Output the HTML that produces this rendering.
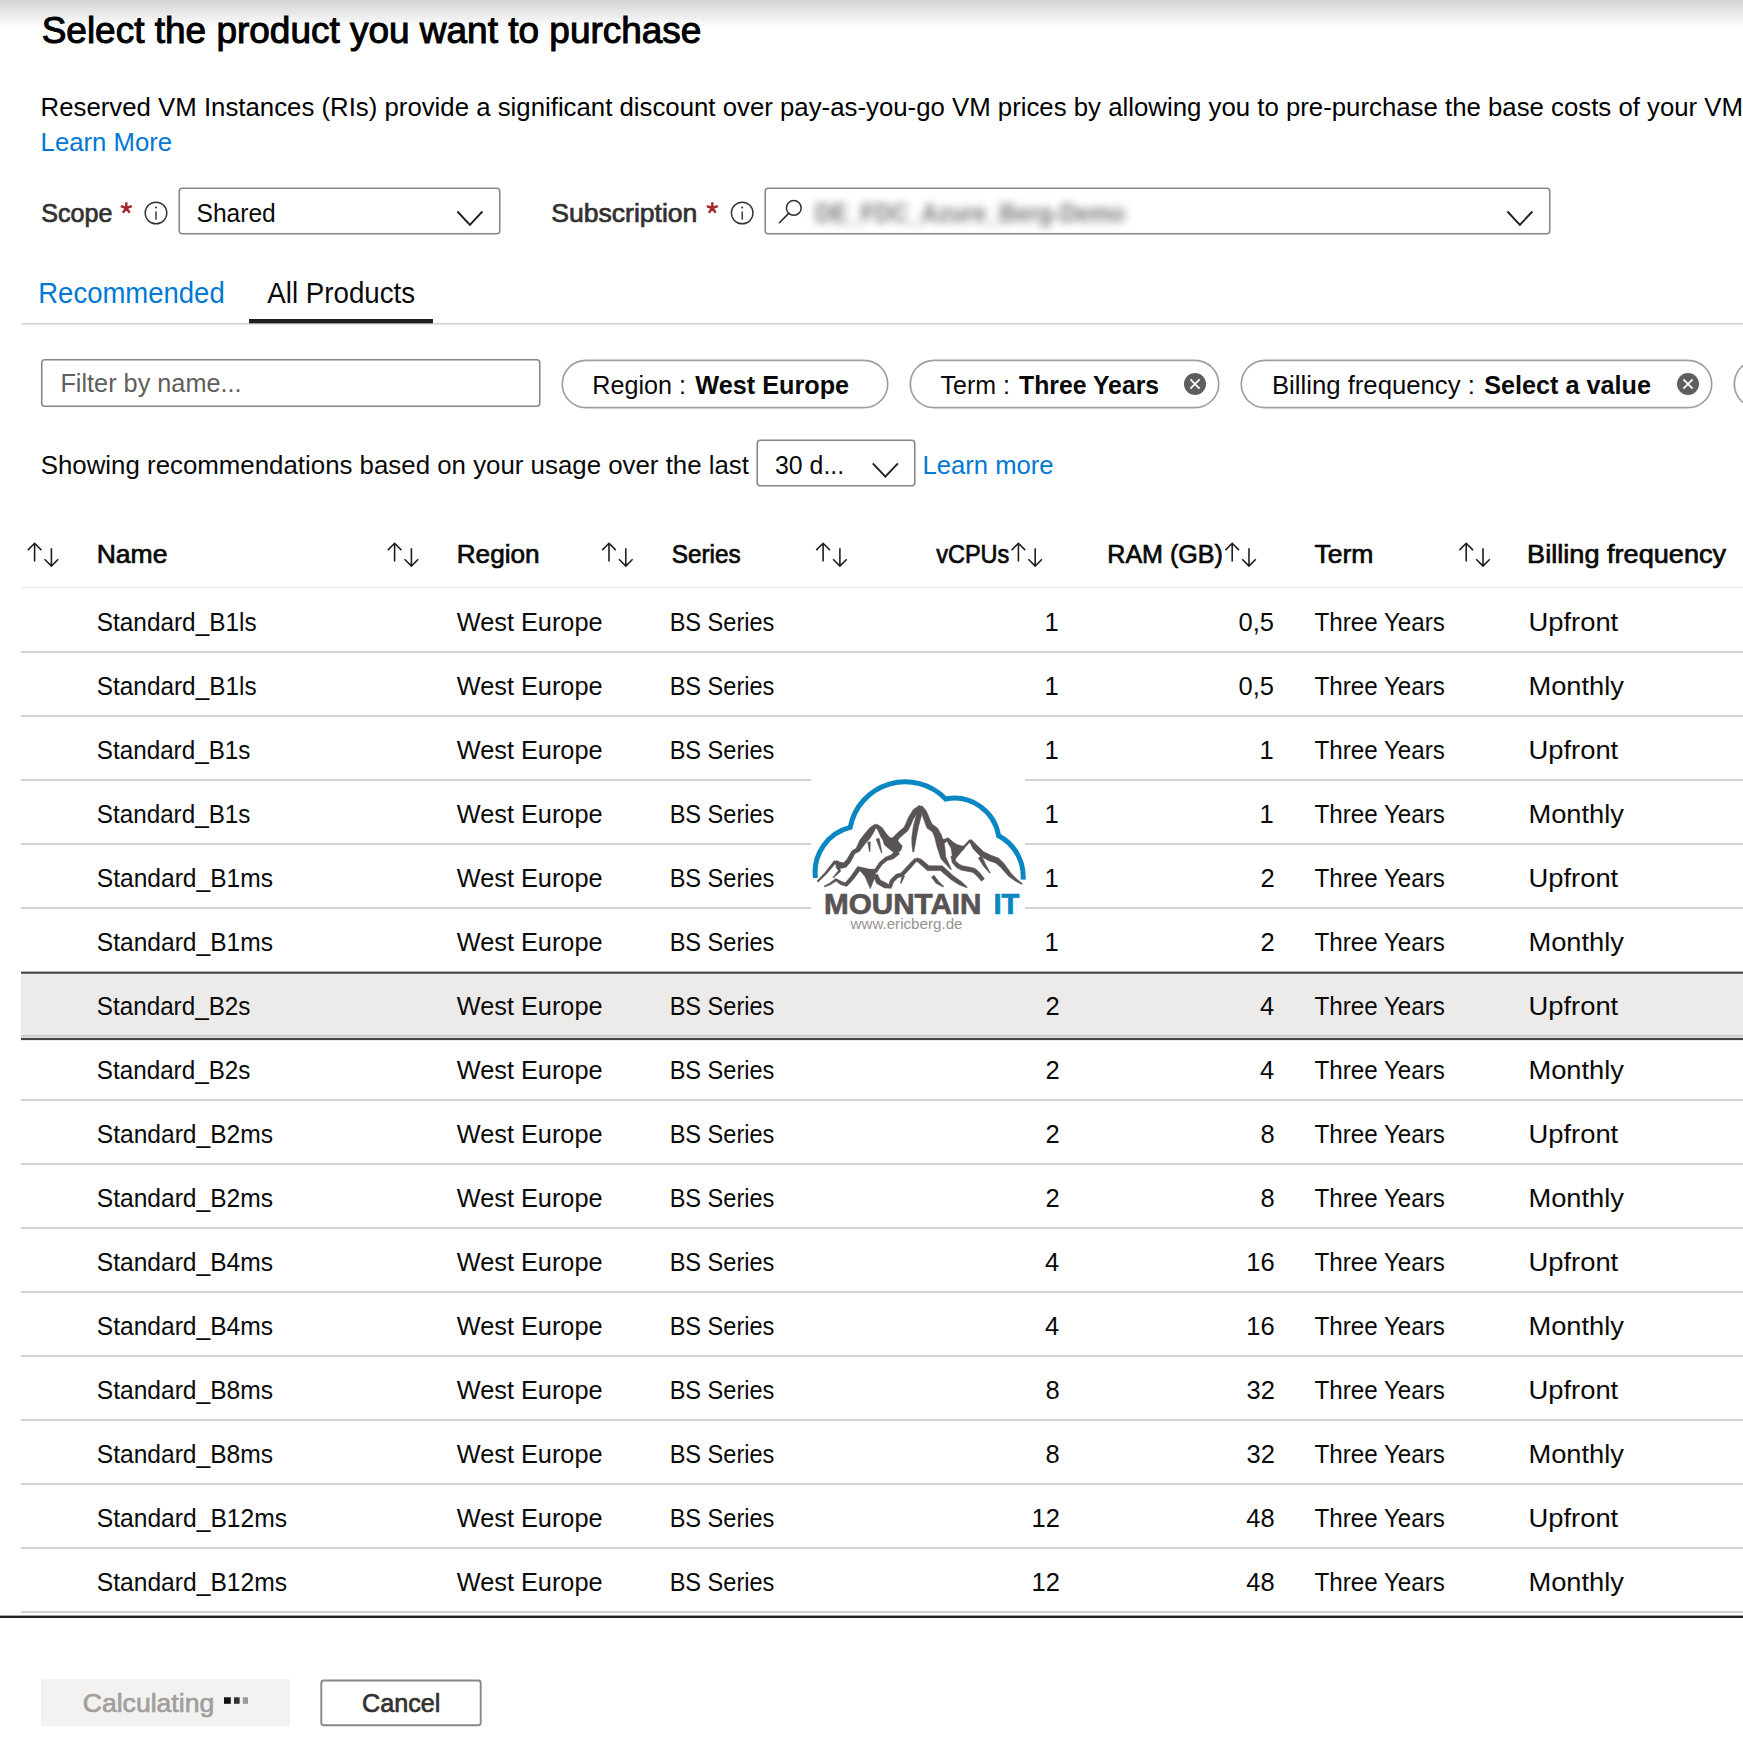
<!DOCTYPE html>
<html><head><meta charset="utf-8"><style>
html,body{margin:0;padding:0;background:#fff;width:1743px;height:1745px;overflow:hidden}
svg{display:block;font-family:"Liberation Sans", sans-serif}
</style></head><body>
<svg width="1743" height="1745" viewBox="0 0 1743 1745">
<defs><linearGradient id="tg" x1="0" y1="0" x2="0" y2="1"><stop offset="0" stop-color="#d5d5d5"/><stop offset="0.35" stop-color="#e3e3e3"/><stop offset="1" stop-color="#ffffff"/></linearGradient><filter id="bl" x="-10%" y="-50%" width="120%" height="200%"><feGaussianBlur stdDeviation="4"/></filter></defs>
<rect x="0" y="0" width="1743" height="28" fill="url(#tg)" />
<text x="41.69" y="43" font-size="36.6" fill="#000" stroke="#000" stroke-width="1.01" textLength="659.74" lengthAdjust="spacingAndGlyphs" >Select the product you want to purchase</text>
<text x="40.58" y="116" font-size="25.5" fill="#000" textLength="1702.48" lengthAdjust="spacingAndGlyphs" >Reserved VM Instances (RIs) provide a significant discount over pay-as-you-go VM prices by allowing you to pre-purchase the base costs of your VM</text>
<text x="40.58" y="150.5" font-size="25.5" fill="#0078d4" textLength="131.48" lengthAdjust="spacingAndGlyphs" >Learn More</text>
<text x="41.26" y="221.5" font-size="25.5" fill="#323130" stroke="#323130" stroke-width="0.7" textLength="71.24" lengthAdjust="spacingAndGlyphs" >Scope</text>
<path d="M126.30,208.00 L126.30,202.20 M126.30,208.00 L131.82,206.21 M126.30,208.00 L129.71,212.69 M126.30,208.00 L122.89,212.69 M126.30,208.00 L120.78,206.21" stroke="#a4262c" stroke-width="2.4" stroke-linecap="butt"/>
<circle cx="156" cy="213" r="10.8" fill="none" stroke="#323130" stroke-width="1.4"/>
<rect x="155.3" y="211.4" width="1.4" height="8.3" fill="#323130"/>
<circle cx="156" cy="207.6" r="1.0" fill="#323130"/>
<rect x="179.25" y="188.25" width="320.5" height="45.5" fill="none" stroke="#8a8886" stroke-width="1.6" rx="3" />
<text x="196.6" y="222" font-size="25.5" fill="#0a0a0a" textLength="79.17" lengthAdjust="spacingAndGlyphs" >Shared</text>
<path d="M457.4,211.5 L469.9,224.8 L482.4,211.5" fill="none" stroke="#201f1e" stroke-width="1.9"/>
<text x="551.22" y="221.5" font-size="25.5" fill="#323130" stroke="#323130" stroke-width="0.7" textLength="146.16" lengthAdjust="spacingAndGlyphs" >Subscription</text>
<path d="M712.30,208.00 L712.30,202.20 M712.30,208.00 L717.82,206.21 M712.30,208.00 L715.71,212.69 M712.30,208.00 L708.89,212.69 M712.30,208.00 L706.78,206.21" stroke="#a4262c" stroke-width="2.4" stroke-linecap="butt"/>
<circle cx="742.2" cy="213" r="10.8" fill="none" stroke="#323130" stroke-width="1.4"/>
<rect x="741.5" y="211.4" width="1.4" height="8.3" fill="#323130"/>
<circle cx="742.2" cy="207.6" r="1.0" fill="#323130"/>
<rect x="765.25" y="188.25" width="784.5" height="45.5" fill="none" stroke="#8a8886" stroke-width="1.6" rx="3" />
<circle cx="793.8" cy="207.9" r="7.4" fill="none" stroke="#323130" stroke-width="1.5"/>
<path d="M788.6,213.4 L779,223.2" stroke="#323130" stroke-width="1.6"/>
<g filter="url(#bl)">
<text x="815" y="222" font-size="25" fill="#777" font-weight="700" textLength="310" lengthAdjust="spacingAndGlyphs" >DE_FDC_Azure_Berg-Demo</text>
</g>
<path d="M1507.4,211.5 L1519.9,224.8 L1532.4,211.5" fill="none" stroke="#201f1e" stroke-width="1.9"/>
<text x="38.25" y="303" font-size="28.8" fill="#0078d4" textLength="186.45" lengthAdjust="spacingAndGlyphs" >Recommended</text>
<text x="267.3" y="303" font-size="28.8" fill="#0a0a0a" textLength="147.81" lengthAdjust="spacingAndGlyphs" >All Products</text>
<rect x="21" y="323" width="1722" height="1.5" fill="#d2d0ce" />
<rect x="249" y="319" width="184" height="4.3" fill="#201f1e" />
<rect x="41.75" y="359.75" width="498.0" height="46.5" fill="none" stroke="#8a8886" stroke-width="1.6" rx="3" />
<text x="60.42" y="391.5" font-size="25.5" fill="#605e5c" textLength="181.17" lengthAdjust="spacingAndGlyphs" >Filter by name...</text>
<rect x="562.3" y="360.3" width="325.4" height="47.4" fill="none" stroke="#a19f9d" stroke-width="1.7" rx="23.7" />
<text x="592.33" y="394" font-size="25.5" fill="#0a0a0a" textLength="93.68" lengthAdjust="spacingAndGlyphs" >Region :</text>
<text x="695.3" y="394" font-size="25.5" fill="#0a0a0a" font-weight="700" textLength="153.78" lengthAdjust="spacingAndGlyphs" >West Europe</text>
<rect x="910.3" y="360.3" width="308.4" height="47.4" fill="none" stroke="#a19f9d" stroke-width="1.7" rx="23.7" />
<text x="940.51" y="394" font-size="25.5" fill="#0a0a0a" textLength="69.49" lengthAdjust="spacingAndGlyphs" >Term :</text>
<text x="1019.06" y="394" font-size="25.5" fill="#0a0a0a" font-weight="700" textLength="140.05" lengthAdjust="spacingAndGlyphs" >Three Years</text>
<circle cx="1195" cy="384" r="11" fill="#605e5c"/>
<path d="M1190.4,379.4 L1199.6,388.6 M1199.6,379.4 L1190.4,388.6" stroke="#fff" stroke-width="1.8"/>
<rect x="1241.3" y="360.3" width="470.4" height="47.4" fill="none" stroke="#a19f9d" stroke-width="1.7" rx="23.7" />
<text x="1271.98" y="394" font-size="25.5" fill="#0a0a0a" textLength="202.81" lengthAdjust="spacingAndGlyphs" >Billing frequency :</text>
<text x="1484.26" y="394" font-size="25.5" fill="#0a0a0a" font-weight="700" textLength="166.68" lengthAdjust="spacingAndGlyphs" >Select a value</text>
<circle cx="1688" cy="384" r="11" fill="#605e5c"/>
<path d="M1683.4,379.4 L1692.6,388.6 M1692.6,379.4 L1683.4,388.6" stroke="#fff" stroke-width="1.8"/>
<rect x="1734.3" y="360.3" width="364.9" height="47.4" fill="none" stroke="#a19f9d" stroke-width="1.7" rx="23.7" />
<text x="40.73" y="474" font-size="25.5" fill="#0a0a0a" textLength="708.26" lengthAdjust="spacingAndGlyphs" >Showing recommendations based on your usage over the last</text>
<rect x="757.25" y="440.25" width="157.5" height="45.5" fill="none" stroke="#8a8886" stroke-width="1.6" rx="3" />
<text x="775.03" y="474" font-size="25.5" fill="#0a0a0a" textLength="69.11" lengthAdjust="spacingAndGlyphs" >30 d...</text>
<path d="M872.8,463.3 L885.3499999999999,476.6 L897.9,463.3" fill="none" stroke="#201f1e" stroke-width="1.9"/>
<text x="922.49" y="474" font-size="25.5" fill="#0078d4" textLength="131.07" lengthAdjust="spacingAndGlyphs" >Learn more</text>
<path d="M34.6,561.5 L34.6,543.5 M27.8,550.1 L34.6,543.3000000000001 L41.4,550.1 M51.4,548.2 L51.4,565.9000000000001 M44.599999999999994,559.3000000000001 L51.4,566.1 L58.2,559.3000000000001" fill="none" stroke="#201f1e" stroke-width="1.6"/>
<path d="M394.59999999999997,561.5 L394.59999999999997,543.5 M387.8,550.1 L394.59999999999997,543.3000000000001 L401.4,550.1 M411.4,548.2 L411.4,565.9000000000001 M404.59999999999997,559.3000000000001 L411.4,566.1 L418.2,559.3000000000001" fill="none" stroke="#201f1e" stroke-width="1.6"/>
<path d="M609.0,561.5 L609.0,543.5 M602.2,550.1 L609.0,543.3000000000001 L615.8000000000001,550.1 M625.8000000000001,548.2 L625.8000000000001,565.9000000000001 M619.0,559.3000000000001 L625.8000000000001,566.1 L632.6,559.3000000000001" fill="none" stroke="#201f1e" stroke-width="1.6"/>
<path d="M823.1,561.5 L823.1,543.5 M816.3000000000001,550.1 L823.1,543.3000000000001 L829.9000000000001,550.1 M839.9000000000001,548.2 L839.9000000000001,565.9000000000001 M833.1,559.3000000000001 L839.9000000000001,566.1 L846.7,559.3000000000001" fill="none" stroke="#201f1e" stroke-width="1.6"/>
<path d="M1018.4,561.5 L1018.4,543.5 M1011.6,550.1 L1018.4,543.3000000000001 L1025.2,550.1 M1035.2,548.2 L1035.2,565.9000000000001 M1028.4,559.3000000000001 L1035.2,566.1 L1042,559.3000000000001" fill="none" stroke="#201f1e" stroke-width="1.6"/>
<path d="M1232.2,561.5 L1232.2,543.5 M1225.3999999999999,550.1 L1232.2,543.3000000000001 L1239.0,550.1 M1249.0,548.2 L1249.0,565.9000000000001 M1242.2,559.3000000000001 L1249.0,566.1 L1255.8,559.3000000000001" fill="none" stroke="#201f1e" stroke-width="1.6"/>
<path d="M1466.2,561.5 L1466.2,543.5 M1459.3999999999999,550.1 L1466.2,543.3000000000001 L1473.0,550.1 M1483.0,548.2 L1483.0,565.9000000000001 M1476.2,559.3000000000001 L1483.0,566.1 L1489.8,559.3000000000001" fill="none" stroke="#201f1e" stroke-width="1.6"/>
<text x="96.68" y="563" font-size="25.5" fill="#0a0a0a" stroke="#0a0a0a" stroke-width="0.7" textLength="70.84" lengthAdjust="spacingAndGlyphs" >Name</text>
<text x="456.7" y="563" font-size="25.5" fill="#0a0a0a" stroke="#0a0a0a" stroke-width="0.7" textLength="82.94" lengthAdjust="spacingAndGlyphs" >Region</text>
<text x="671.68" y="563" font-size="25.5" fill="#0a0a0a" stroke="#0a0a0a" stroke-width="0.7" textLength="69.02" lengthAdjust="spacingAndGlyphs" >Series</text>
<text x="936.23" y="563" font-size="25.5" fill="#0a0a0a" stroke="#0a0a0a" stroke-width="0.7" textLength="73.12" lengthAdjust="spacingAndGlyphs" >vCPUs</text>
<text x="1107.28" y="563" font-size="25.5" fill="#0a0a0a" stroke="#0a0a0a" stroke-width="0.7" textLength="115.63" lengthAdjust="spacingAndGlyphs" >RAM (GB)</text>
<text x="1314.44" y="563" font-size="25.5" fill="#0a0a0a" stroke="#0a0a0a" stroke-width="0.7" textLength="59.04" lengthAdjust="spacingAndGlyphs" >Term</text>
<text x="1527.14" y="563" font-size="25.5" fill="#0a0a0a" stroke="#0a0a0a" stroke-width="0.7" textLength="198.95" lengthAdjust="spacingAndGlyphs" >Billing frequency</text>
<rect x="21" y="587" width="1722" height="1.5" fill="#edebe9" />
<text x="96.81" y="631" font-size="25.5" fill="#0a0a0a" textLength="159.79" lengthAdjust="spacingAndGlyphs" >Standard_B1ls</text>
<text x="456.75" y="631" font-size="25.5" fill="#0a0a0a" textLength="145.83" lengthAdjust="spacingAndGlyphs" >West Europe</text>
<text x="669.65" y="631" font-size="25.5" fill="#0a0a0a" textLength="104.77" lengthAdjust="spacingAndGlyphs" >BS Series</text>
<text x="1058.69" y="631" font-size="25.5" fill="#0a0a0a" text-anchor="end" >1</text>
<text x="1274.0" y="631" font-size="25.5" fill="#0a0a0a" text-anchor="end" >0,5</text>
<text x="1314.43" y="631" font-size="25.5" fill="#0a0a0a" textLength="130.54" lengthAdjust="spacingAndGlyphs" >Three Years</text>
<text x="1528.45" y="631" font-size="25.5" fill="#0a0a0a" textLength="89.78" lengthAdjust="spacingAndGlyphs" >Upfront</text>
<rect x="21" y="651.2" width="1722" height="1.6" fill="#c8c6c4" />
<text x="96.81" y="695" font-size="25.5" fill="#0a0a0a" textLength="159.79" lengthAdjust="spacingAndGlyphs" >Standard_B1ls</text>
<text x="456.75" y="695" font-size="25.5" fill="#0a0a0a" textLength="145.83" lengthAdjust="spacingAndGlyphs" >West Europe</text>
<text x="669.65" y="695" font-size="25.5" fill="#0a0a0a" textLength="104.77" lengthAdjust="spacingAndGlyphs" >BS Series</text>
<text x="1058.69" y="695" font-size="25.5" fill="#0a0a0a" text-anchor="end" >1</text>
<text x="1274.0" y="695" font-size="25.5" fill="#0a0a0a" text-anchor="end" >0,5</text>
<text x="1314.43" y="695" font-size="25.5" fill="#0a0a0a" textLength="130.54" lengthAdjust="spacingAndGlyphs" >Three Years</text>
<text x="1528.46" y="695" font-size="25.5" fill="#0a0a0a" textLength="95.49" lengthAdjust="spacingAndGlyphs" >Monthly</text>
<rect x="21" y="715.2" width="1722" height="1.6" fill="#c8c6c4" />
<text x="96.81" y="759" font-size="25.5" fill="#0a0a0a" textLength="153.62" lengthAdjust="spacingAndGlyphs" >Standard_B1s</text>
<text x="456.75" y="759" font-size="25.5" fill="#0a0a0a" textLength="145.83" lengthAdjust="spacingAndGlyphs" >West Europe</text>
<text x="669.65" y="759" font-size="25.5" fill="#0a0a0a" textLength="104.77" lengthAdjust="spacingAndGlyphs" >BS Series</text>
<text x="1058.69" y="759" font-size="25.5" fill="#0a0a0a" text-anchor="end" >1</text>
<text x="1273.69" y="759" font-size="25.5" fill="#0a0a0a" text-anchor="end" >1</text>
<text x="1314.43" y="759" font-size="25.5" fill="#0a0a0a" textLength="130.54" lengthAdjust="spacingAndGlyphs" >Three Years</text>
<text x="1528.45" y="759" font-size="25.5" fill="#0a0a0a" textLength="89.78" lengthAdjust="spacingAndGlyphs" >Upfront</text>
<rect x="21" y="779.2" width="1722" height="1.6" fill="#c8c6c4" />
<text x="96.81" y="823" font-size="25.5" fill="#0a0a0a" textLength="153.62" lengthAdjust="spacingAndGlyphs" >Standard_B1s</text>
<text x="456.75" y="823" font-size="25.5" fill="#0a0a0a" textLength="145.83" lengthAdjust="spacingAndGlyphs" >West Europe</text>
<text x="669.65" y="823" font-size="25.5" fill="#0a0a0a" textLength="104.77" lengthAdjust="spacingAndGlyphs" >BS Series</text>
<text x="1058.69" y="823" font-size="25.5" fill="#0a0a0a" text-anchor="end" >1</text>
<text x="1273.69" y="823" font-size="25.5" fill="#0a0a0a" text-anchor="end" >1</text>
<text x="1314.43" y="823" font-size="25.5" fill="#0a0a0a" textLength="130.54" lengthAdjust="spacingAndGlyphs" >Three Years</text>
<text x="1528.46" y="823" font-size="25.5" fill="#0a0a0a" textLength="95.49" lengthAdjust="spacingAndGlyphs" >Monthly</text>
<rect x="21" y="843.2" width="1722" height="1.6" fill="#c8c6c4" />
<text x="96.8" y="887" font-size="25.5" fill="#0a0a0a" textLength="176.13" lengthAdjust="spacingAndGlyphs" >Standard_B1ms</text>
<text x="456.75" y="887" font-size="25.5" fill="#0a0a0a" textLength="145.83" lengthAdjust="spacingAndGlyphs" >West Europe</text>
<text x="669.65" y="887" font-size="25.5" fill="#0a0a0a" textLength="104.77" lengthAdjust="spacingAndGlyphs" >BS Series</text>
<text x="1058.69" y="887" font-size="25.5" fill="#0a0a0a" text-anchor="end" >1</text>
<text x="1274.79" y="887" font-size="25.5" fill="#0a0a0a" text-anchor="end" >2</text>
<text x="1314.43" y="887" font-size="25.5" fill="#0a0a0a" textLength="130.54" lengthAdjust="spacingAndGlyphs" >Three Years</text>
<text x="1528.45" y="887" font-size="25.5" fill="#0a0a0a" textLength="89.78" lengthAdjust="spacingAndGlyphs" >Upfront</text>
<rect x="21" y="907.2" width="1722" height="1.6" fill="#c8c6c4" />
<text x="96.8" y="951" font-size="25.5" fill="#0a0a0a" textLength="176.13" lengthAdjust="spacingAndGlyphs" >Standard_B1ms</text>
<text x="456.75" y="951" font-size="25.5" fill="#0a0a0a" textLength="145.83" lengthAdjust="spacingAndGlyphs" >West Europe</text>
<text x="669.65" y="951" font-size="25.5" fill="#0a0a0a" textLength="104.77" lengthAdjust="spacingAndGlyphs" >BS Series</text>
<text x="1058.69" y="951" font-size="25.5" fill="#0a0a0a" text-anchor="end" >1</text>
<text x="1274.79" y="951" font-size="25.5" fill="#0a0a0a" text-anchor="end" >2</text>
<text x="1314.43" y="951" font-size="25.5" fill="#0a0a0a" textLength="130.54" lengthAdjust="spacingAndGlyphs" >Three Years</text>
<text x="1528.46" y="951" font-size="25.5" fill="#0a0a0a" textLength="95.49" lengthAdjust="spacingAndGlyphs" >Monthly</text>
<rect x="21" y="974" width="1722" height="61" fill="#edebe9" />
<text x="96.81" y="1015" font-size="25.5" fill="#0a0a0a" textLength="153.62" lengthAdjust="spacingAndGlyphs" >Standard_B2s</text>
<text x="456.75" y="1015" font-size="25.5" fill="#0a0a0a" textLength="145.83" lengthAdjust="spacingAndGlyphs" >West Europe</text>
<text x="669.65" y="1015" font-size="25.5" fill="#0a0a0a" textLength="104.77" lengthAdjust="spacingAndGlyphs" >BS Series</text>
<text x="1059.79" y="1015" font-size="25.5" fill="#0a0a0a" text-anchor="end" >2</text>
<text x="1274.29" y="1015" font-size="25.5" fill="#0a0a0a" text-anchor="end" >4</text>
<text x="1314.43" y="1015" font-size="25.5" fill="#0a0a0a" textLength="130.54" lengthAdjust="spacingAndGlyphs" >Three Years</text>
<text x="1528.45" y="1015" font-size="25.5" fill="#0a0a0a" textLength="89.78" lengthAdjust="spacingAndGlyphs" >Upfront</text>
<rect x="21" y="971.6" width="1722" height="2.2" fill="#4a4846" />
<rect x="21" y="1035" width="1722" height="1.6" fill="#c8c6c4" />
<rect x="21" y="1037.8" width="1722" height="2.3" fill="#484644" />
<text x="96.81" y="1079" font-size="25.5" fill="#0a0a0a" textLength="153.62" lengthAdjust="spacingAndGlyphs" >Standard_B2s</text>
<text x="456.75" y="1079" font-size="25.5" fill="#0a0a0a" textLength="145.83" lengthAdjust="spacingAndGlyphs" >West Europe</text>
<text x="669.65" y="1079" font-size="25.5" fill="#0a0a0a" textLength="104.77" lengthAdjust="spacingAndGlyphs" >BS Series</text>
<text x="1059.79" y="1079" font-size="25.5" fill="#0a0a0a" text-anchor="end" >2</text>
<text x="1274.29" y="1079" font-size="25.5" fill="#0a0a0a" text-anchor="end" >4</text>
<text x="1314.43" y="1079" font-size="25.5" fill="#0a0a0a" textLength="130.54" lengthAdjust="spacingAndGlyphs" >Three Years</text>
<text x="1528.46" y="1079" font-size="25.5" fill="#0a0a0a" textLength="95.49" lengthAdjust="spacingAndGlyphs" >Monthly</text>
<rect x="21" y="1099.2" width="1722" height="1.6" fill="#c8c6c4" />
<text x="96.8" y="1143" font-size="25.5" fill="#0a0a0a" textLength="176.23" lengthAdjust="spacingAndGlyphs" >Standard_B2ms</text>
<text x="456.75" y="1143" font-size="25.5" fill="#0a0a0a" textLength="145.83" lengthAdjust="spacingAndGlyphs" >West Europe</text>
<text x="669.65" y="1143" font-size="25.5" fill="#0a0a0a" textLength="104.77" lengthAdjust="spacingAndGlyphs" >BS Series</text>
<text x="1059.79" y="1143" font-size="25.5" fill="#0a0a0a" text-anchor="end" >2</text>
<text x="1274.79" y="1143" font-size="25.5" fill="#0a0a0a" text-anchor="end" >8</text>
<text x="1314.43" y="1143" font-size="25.5" fill="#0a0a0a" textLength="130.54" lengthAdjust="spacingAndGlyphs" >Three Years</text>
<text x="1528.45" y="1143" font-size="25.5" fill="#0a0a0a" textLength="89.78" lengthAdjust="spacingAndGlyphs" >Upfront</text>
<rect x="21" y="1163.2" width="1722" height="1.6" fill="#c8c6c4" />
<text x="96.8" y="1207" font-size="25.5" fill="#0a0a0a" textLength="176.23" lengthAdjust="spacingAndGlyphs" >Standard_B2ms</text>
<text x="456.75" y="1207" font-size="25.5" fill="#0a0a0a" textLength="145.83" lengthAdjust="spacingAndGlyphs" >West Europe</text>
<text x="669.65" y="1207" font-size="25.5" fill="#0a0a0a" textLength="104.77" lengthAdjust="spacingAndGlyphs" >BS Series</text>
<text x="1059.79" y="1207" font-size="25.5" fill="#0a0a0a" text-anchor="end" >2</text>
<text x="1274.79" y="1207" font-size="25.5" fill="#0a0a0a" text-anchor="end" >8</text>
<text x="1314.43" y="1207" font-size="25.5" fill="#0a0a0a" textLength="130.54" lengthAdjust="spacingAndGlyphs" >Three Years</text>
<text x="1528.46" y="1207" font-size="25.5" fill="#0a0a0a" textLength="95.49" lengthAdjust="spacingAndGlyphs" >Monthly</text>
<rect x="21" y="1227.2" width="1722" height="1.6" fill="#c8c6c4" />
<text x="96.8" y="1271" font-size="25.5" fill="#0a0a0a" textLength="176.23" lengthAdjust="spacingAndGlyphs" >Standard_B4ms</text>
<text x="456.75" y="1271" font-size="25.5" fill="#0a0a0a" textLength="145.83" lengthAdjust="spacingAndGlyphs" >West Europe</text>
<text x="669.65" y="1271" font-size="25.5" fill="#0a0a0a" textLength="104.77" lengthAdjust="spacingAndGlyphs" >BS Series</text>
<text x="1059.29" y="1271" font-size="25.5" fill="#0a0a0a" text-anchor="end" >4</text>
<text x="1274.72" y="1271" font-size="25.5" fill="#0a0a0a" text-anchor="end" >16</text>
<text x="1314.43" y="1271" font-size="25.5" fill="#0a0a0a" textLength="130.54" lengthAdjust="spacingAndGlyphs" >Three Years</text>
<text x="1528.45" y="1271" font-size="25.5" fill="#0a0a0a" textLength="89.78" lengthAdjust="spacingAndGlyphs" >Upfront</text>
<rect x="21" y="1291.2" width="1722" height="1.6" fill="#c8c6c4" />
<text x="96.8" y="1335" font-size="25.5" fill="#0a0a0a" textLength="176.23" lengthAdjust="spacingAndGlyphs" >Standard_B4ms</text>
<text x="456.75" y="1335" font-size="25.5" fill="#0a0a0a" textLength="145.83" lengthAdjust="spacingAndGlyphs" >West Europe</text>
<text x="669.65" y="1335" font-size="25.5" fill="#0a0a0a" textLength="104.77" lengthAdjust="spacingAndGlyphs" >BS Series</text>
<text x="1059.29" y="1335" font-size="25.5" fill="#0a0a0a" text-anchor="end" >4</text>
<text x="1274.72" y="1335" font-size="25.5" fill="#0a0a0a" text-anchor="end" >16</text>
<text x="1314.43" y="1335" font-size="25.5" fill="#0a0a0a" textLength="130.54" lengthAdjust="spacingAndGlyphs" >Three Years</text>
<text x="1528.46" y="1335" font-size="25.5" fill="#0a0a0a" textLength="95.49" lengthAdjust="spacingAndGlyphs" >Monthly</text>
<rect x="21" y="1355.2" width="1722" height="1.6" fill="#c8c6c4" />
<text x="96.8" y="1399" font-size="25.5" fill="#0a0a0a" textLength="176.23" lengthAdjust="spacingAndGlyphs" >Standard_B8ms</text>
<text x="456.75" y="1399" font-size="25.5" fill="#0a0a0a" textLength="145.83" lengthAdjust="spacingAndGlyphs" >West Europe</text>
<text x="669.65" y="1399" font-size="25.5" fill="#0a0a0a" textLength="104.77" lengthAdjust="spacingAndGlyphs" >BS Series</text>
<text x="1059.79" y="1399" font-size="25.5" fill="#0a0a0a" text-anchor="end" >8</text>
<text x="1274.97" y="1399" font-size="25.5" fill="#0a0a0a" text-anchor="end" >32</text>
<text x="1314.43" y="1399" font-size="25.5" fill="#0a0a0a" textLength="130.54" lengthAdjust="spacingAndGlyphs" >Three Years</text>
<text x="1528.45" y="1399" font-size="25.5" fill="#0a0a0a" textLength="89.78" lengthAdjust="spacingAndGlyphs" >Upfront</text>
<rect x="21" y="1419.2" width="1722" height="1.6" fill="#c8c6c4" />
<text x="96.8" y="1463" font-size="25.5" fill="#0a0a0a" textLength="176.23" lengthAdjust="spacingAndGlyphs" >Standard_B8ms</text>
<text x="456.75" y="1463" font-size="25.5" fill="#0a0a0a" textLength="145.83" lengthAdjust="spacingAndGlyphs" >West Europe</text>
<text x="669.65" y="1463" font-size="25.5" fill="#0a0a0a" textLength="104.77" lengthAdjust="spacingAndGlyphs" >BS Series</text>
<text x="1059.79" y="1463" font-size="25.5" fill="#0a0a0a" text-anchor="end" >8</text>
<text x="1274.97" y="1463" font-size="25.5" fill="#0a0a0a" text-anchor="end" >32</text>
<text x="1314.43" y="1463" font-size="25.5" fill="#0a0a0a" textLength="130.54" lengthAdjust="spacingAndGlyphs" >Three Years</text>
<text x="1528.46" y="1463" font-size="25.5" fill="#0a0a0a" textLength="95.49" lengthAdjust="spacingAndGlyphs" >Monthly</text>
<rect x="21" y="1483.2" width="1722" height="1.6" fill="#c8c6c4" />
<text x="96.79" y="1527" font-size="25.5" fill="#0a0a0a" textLength="190.22" lengthAdjust="spacingAndGlyphs" >Standard_B12ms</text>
<text x="456.75" y="1527" font-size="25.5" fill="#0a0a0a" textLength="145.83" lengthAdjust="spacingAndGlyphs" >West Europe</text>
<text x="669.65" y="1527" font-size="25.5" fill="#0a0a0a" textLength="104.77" lengthAdjust="spacingAndGlyphs" >BS Series</text>
<text x="1059.97" y="1527" font-size="25.5" fill="#0a0a0a" text-anchor="end" >12</text>
<text x="1274.72" y="1527" font-size="25.5" fill="#0a0a0a" text-anchor="end" >48</text>
<text x="1314.43" y="1527" font-size="25.5" fill="#0a0a0a" textLength="130.54" lengthAdjust="spacingAndGlyphs" >Three Years</text>
<text x="1528.45" y="1527" font-size="25.5" fill="#0a0a0a" textLength="89.78" lengthAdjust="spacingAndGlyphs" >Upfront</text>
<rect x="21" y="1547.2" width="1722" height="1.6" fill="#c8c6c4" />
<text x="96.79" y="1591" font-size="25.5" fill="#0a0a0a" textLength="190.22" lengthAdjust="spacingAndGlyphs" >Standard_B12ms</text>
<text x="456.75" y="1591" font-size="25.5" fill="#0a0a0a" textLength="145.83" lengthAdjust="spacingAndGlyphs" >West Europe</text>
<text x="669.65" y="1591" font-size="25.5" fill="#0a0a0a" textLength="104.77" lengthAdjust="spacingAndGlyphs" >BS Series</text>
<text x="1059.97" y="1591" font-size="25.5" fill="#0a0a0a" text-anchor="end" >12</text>
<text x="1274.72" y="1591" font-size="25.5" fill="#0a0a0a" text-anchor="end" >48</text>
<text x="1314.43" y="1591" font-size="25.5" fill="#0a0a0a" textLength="130.54" lengthAdjust="spacingAndGlyphs" >Three Years</text>
<text x="1528.46" y="1591" font-size="25.5" fill="#0a0a0a" textLength="95.49" lengthAdjust="spacingAndGlyphs" >Monthly</text>
<rect x="21" y="1611.2" width="1722" height="1.6" fill="#c8c6c4" />
<rect x="0" y="1615.6" width="1743" height="2.4" fill="#201f1e" />
<g id="logo">
<rect x="811" y="772" width="214" height="162" fill="#fff" />
<path d="M815.5,878 A46,46 0 0 1 850.2,827.4 A56,56 0 0 1 945.7,799 A45,45 0 0 1 998.6,835.8 A46,46 0 0 1 1023.1,879.7" fill="none" stroke="#0a87c1" stroke-width="5"/>
<g fill="#595353" stroke="#595353" stroke-width="0.5" stroke-linejoin="round"><path d="M818.05,882.15 L826.78,873.69 L836.51,862.30 L834.29,860.50 L825.22,872.31 L816.95,881.05Z"/><path d="M834.48,862.32 L836.53,866.15 L841.07,868.41 L846.43,866.97 L850.59,861.97 L854.90,853.73 L859.61,851.20 L865.17,843.75 L869.94,838.57 L874.34,831.26 L876.70,825.83 L874.70,824.17 L869.66,827.74 L864.26,834.23 L859.83,840.05 L856.19,848.20 L851.70,851.07 L846.81,859.43 L843.57,862.63 L841.73,862.59 L839.47,861.85 L836.32,860.48Z"/><path d="M835.69,866.72 L838.40,870.59 L832.82,877.43 L833.38,877.97 L840.60,871.41 L839.31,865.28Z"/><path d="M874.81,825.95 L877.92,830.57 L881.37,837.91 L886.42,842.84 L892.66,843.58 L897.84,843.90 L898.16,838.70 L893.34,838.42 L889.58,837.16 L886.63,834.09 L882.08,827.43 L876.59,824.05Z"/><path d="M896.34,850.00 L890.84,855.04 L885.32,857.21 L879.46,862.27 L875.64,868.12 L873.89,871.20 L876.71,872.80 L878.36,869.88 L882.14,864.73 L887.28,860.59 L893.16,858.96 L899.66,854.00Z"/><path d="M919.52,805.28 L913.50,809.33 L908.71,816.77 L905.63,823.92 L904.06,827.27 L898.24,832.08 L892.16,838.16 L887.62,843.62 L890.38,846.38 L895.84,841.84 L901.76,835.92 L907.94,830.73 L910.37,826.08 L913.29,819.23 L917.50,812.67 L921.68,807.72Z"/><path d="M918.39,807.77 L916.46,814.44 L913.46,825.45 L911.74,837.70 L911.88,844.92 L912.78,851.99 L913.82,852.01 L915.12,845.08 L916.26,838.30 L918.54,826.55 L921.54,815.56 L921.61,808.23Z"/><path d="M919.22,807.35 L921.65,813.11 L924.28,821.07 L926.96,828.03 L932.52,832.10 L934.64,837.22 L937.01,846.93 L941.02,859.05 L950.88,869.82 L951.52,869.38 L945.78,856.95 L944.59,845.07 L941.36,834.78 L937.48,827.90 L932.04,823.97 L929.72,818.93 L926.35,810.89 L921.98,805.65Z"/><path d="M940.26,842.09 L944.58,843.23 L946.85,841.34 L950.55,845.76 L955.09,848.58 L959.64,849.42 L963.80,849.61 L964.20,846.39 L960.36,845.58 L956.91,844.42 L953.45,842.24 L948.15,837.66 L944.02,839.37 L940.94,838.91Z"/><path d="M950.76,856.37 L952.26,862.87 L956.63,867.82 L961.36,870.18 L969.54,871.73 L972.88,872.48 L976.35,875.56 L981.50,881.25 L984.50,878.75 L979.65,872.44 L975.12,868.52 L970.46,867.27 L962.64,865.82 L959.37,864.18 L955.74,861.13 L955.24,855.63Z"/><path d="M969.48,839.64 L963.26,846.36 L954.25,857.38 L955.75,858.62 L964.74,847.64 L970.92,840.96Z"/><path d="M969.14,841.06 L973.03,848.70 L980.27,856.36 L988.84,860.68 L995.53,863.03 L1000.06,866.74 L1008.57,876.33 L1015.22,881.04 L1021.71,884.43 L1022.29,883.57 L1016.78,878.96 L1011.43,873.67 L1003.94,863.26 L998.47,857.97 L991.16,855.32 L983.73,851.64 L976.97,845.30 L971.26,839.54Z"/><path d="M978.30,857.95 L983.90,866.69 L989.68,873.23 L990.32,872.77 L986.10,865.31 L981.70,856.05Z"/><path d="M915.36,860.80 L918.66,862.84 L927.37,870.66 L940.45,870.62 L950.48,879.28 L958.94,884.63 L966.83,887.84 L967.37,886.96 L961.06,881.37 L953.32,875.72 L942.35,865.78 L929.03,865.74 L921.34,859.16 L916.64,857.80Z"/><path d="M931.48,877.15 L935.86,883.15 L943.09,887.12 L943.71,886.28 L938.14,880.85 L934.12,875.25Z"/><path d="M824.60,886.88 L830.49,884.84 L836.02,880.99 L840.29,884.46 L846.81,886.38 L853.53,879.21 L860.01,870.43 L863.21,872.98 L868.72,874.29 L875.42,873.25 L875.18,869.35 L869.08,869.11 L864.79,868.02 L857.59,866.57 L850.47,876.79 L845.19,882.82 L841.71,881.54 L835.78,878.41 L829.51,883.16 L824.20,885.92Z"/><path d="M873.24,875.97 L876.63,883.60 L884.42,887.91 L891.30,888.37 L893.62,881.98 L898.04,877.65 L903.29,876.05 L911.44,867.32 L917.21,860.38 L914.79,858.22 L908.56,864.68 L900.91,872.95 L895.96,874.35 L890.38,879.82 L888.70,884.63 L886.38,883.09 L880.37,880.00 L877.36,874.03Z"/><path d="M902.17,875.28 L900.43,883.17 L901.17,883.43 L904.63,876.12Z"/><path d="M867.70,842.11 L869.48,851.53 L870.12,851.47 L870.30,841.89Z"/><path d="M876.04,839.16 L881.49,852.99 L882.11,852.81 L879.16,838.24Z"/><path d="M882.5,839.0 L887.1,841.3 L893.1,840.4 L898.1,841.3 L902.3,845.9 L900.9,850.5 L896.3,853.7 L894.5,853.2 L889.9,849.6 L884.4,845.0Z"/><path d="M948.0,843.0 L964.0,847.5 L955.0,858.0 L953.0,861.0 L951.0,848.0Z"/><path d="M860.2,870.8 L875.3,871.7 L875.3,876.3 L870.3,888.7 L864.8,876.3Z"/></g>
<text x="824" y="913.9" font-size="29.6" fill="#595353" font-weight="700" textLength="157.5" lengthAdjust="spacingAndGlyphs" stroke="#595353" stroke-width="0.7">MOUNTAIN</text>
<text x="993.5" y="913.9" font-size="29.6" fill="#0a87c1" font-weight="700" textLength="26" lengthAdjust="spacingAndGlyphs" stroke="#0a87c1" stroke-width="0.7">IT</text>
<text x="850.5" y="929.3" font-size="14" fill="#979292" textLength="112" lengthAdjust="spacingAndGlyphs" >www.ericberg.de</text>
</g>
<rect x="41" y="1679" width="249" height="47.5" fill="#f3f2f1" rx="2" />
<text x="82.76" y="1712" font-size="25.5" fill="#a19f9d" stroke="#a19f9d" stroke-width="0.7" textLength="131.45" lengthAdjust="spacingAndGlyphs" >Calculating</text>
<rect x="224" y="1697.3" width="6.8" height="6.5" fill="#111" />
<rect x="234" y="1697.3" width="5.6" height="6.5" fill="#333" />
<rect x="242.8" y="1697.3" width="5.2" height="6.5" fill="#999" />
<rect x="321.3" y="1680.5" width="159.4" height="44.8" fill="none" stroke="#8a8886" stroke-width="1.9" rx="2.5" />
<text x="362.01" y="1712" font-size="25.5" fill="#323130" stroke="#323130" stroke-width="0.7" textLength="78.36" lengthAdjust="spacingAndGlyphs" >Cancel</text>
</svg>
</body></html>
